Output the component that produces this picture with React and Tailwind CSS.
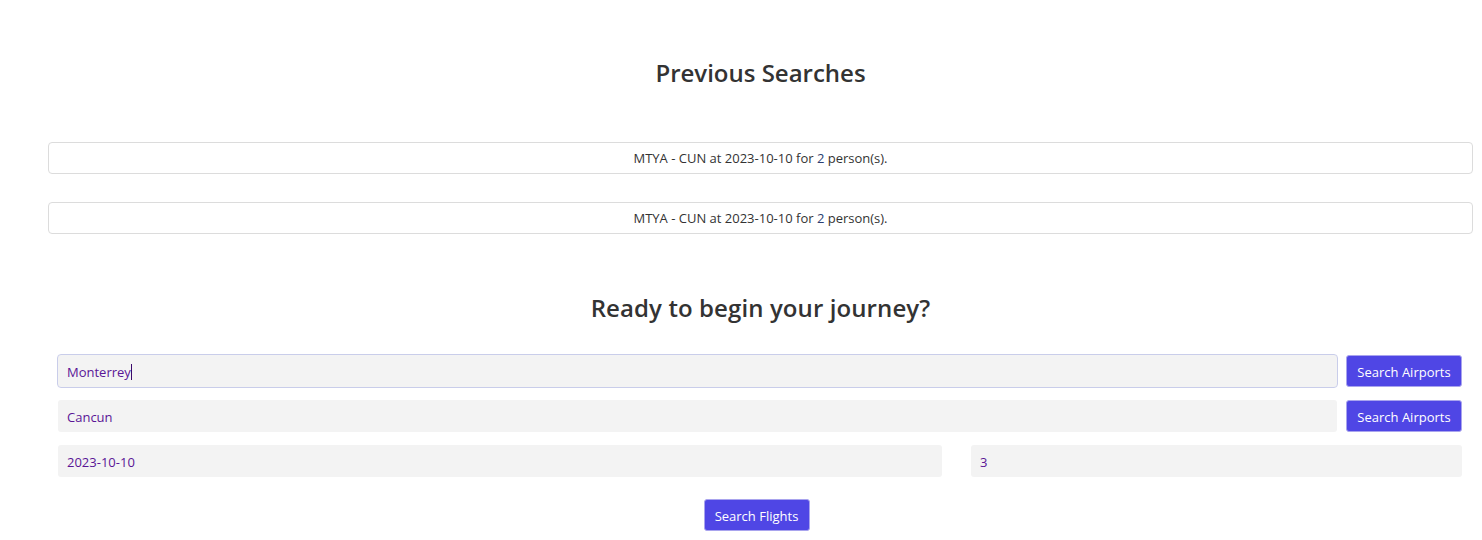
import React from "react";

const font = { fontFamily: '"Open Sans", "Noto Sans", sans-serif' };

function Card() {
  return (
    <div className="h-[32px] border border-[#dcdcdc] rounded-[4px] flex items-center justify-center pt-[2px] text-[13px] text-[#333]">
      <span>
        MTYA - CUN at 2023-10-10 for <span className="text-[#2b3f73]">2</span> person(s).
      </span>
    </div>
  );
}

function Btn({ children }) {
  return (
    <button className="h-[32px] w-[116px] pt-[2px] bg-[#4f46e5] border border-[#a9a4ee] rounded-[3px] text-white text-[13px] leading-none">
      {children}
    </button>
  );
}

const inputCls =
  "h-[32px] bg-[#f3f3f3] rounded-[3px] flex items-center pl-[9px] pt-[3px] text-[13px] text-[#5a1596]";

export default function App() {
  return (
    <div className="bg-white min-h-[540px] w-[1482px] text-[#333]" style={font}>
      <div className="pt-[57px] pl-[48px] pr-[9px]">
        <h2 className="text-[24px] leading-[32px] font-semibold text-center text-[#333]">Previous Searches</h2>
        <div className="mt-[53px] flex flex-col gap-[28px]">
          <Card />
          <Card />
        </div>
        <h2 className="mt-[58px] text-[24px] leading-[32px] font-semibold text-center text-[#333] tracking-[0.1px]">
          Ready to begin your journey?
        </h2>
      </div>
      <div className="pl-[58px] pr-[20px] mt-[31px] flex flex-col">
        <div className="flex items-center gap-[9px]">
          <div className={"flex-1 outline outline-1 outline-[#c9cdea] " + inputCls}>
            Monterrey<span className="inline-block w-px h-[16px] bg-[#3b0a6b] -mt-[2px]"></span>
          </div>
          <Btn>Search Airports</Btn>
        </div>
        <div className="mt-[13px] flex items-center gap-[9px]">
          <div className={"flex-1 " + inputCls}>Cancun</div>
          <Btn>Search Airports</Btn>
        </div>
        <div className="mt-[13px] flex items-center gap-[29px]">
          <div className={"flex-1 " + inputCls}>2023-10-10</div>
          <div className={"w-[491px] " + inputCls}>3</div>
        </div>
        <div className="mt-[22px] flex justify-center pr-[7px]">
          <button className="h-[32px] w-[106px] pt-[2px] bg-[#4f46e5] border border-[#a9a4ee] rounded-[3px] text-white text-[13px] leading-none">
            Search Flights
          </button>
        </div>
      </div>
    </div>
  );
}
